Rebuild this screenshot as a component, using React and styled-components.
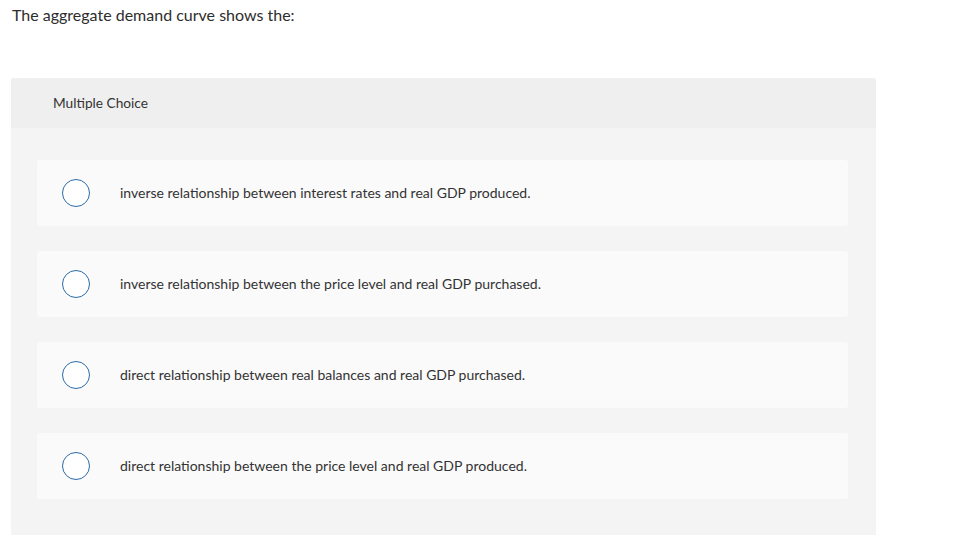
import styled, { createGlobalStyle } from 'styled-components'

const GlobalStyle = createGlobalStyle`
    body {
        margin: 0;
        background: #fff;
        font-family: Lato, "Open Sans", Arial, sans-serif;
        color: #333;
    }
`

const Page = styled.div`
    padding: 5px 0 0 11px;
    width: 865px;
`

const Question = styled.p`
    margin: 0 0 0 1px;
    font-size: 16px;
    line-height: 20px;
    color: #2d2d2d;
`

const Panel = styled.div`
    margin-top: 53px;
    background: #f4f4f4;
    border-radius: 3px 3px 0 0;
    padding-bottom: 40px;
`

const PanelHeader = styled.div`
    height: 50px;
    display: flex;
    align-items: center;
    padding: 0 0 1px 42px;
    box-sizing: border-box;
    background: #efefef;
    border-radius: 3px 3px 0 0;
    font-size: 13.7px;
    color: #333;
`

const Options = styled.ul`
    list-style: none;
    margin: 0;
    padding: 32px 28px 0 26px;
    display: flex;
    flex-direction: column;
    gap: 25px;
`

const Option = styled.li`
    height: 66px;
    display: flex;
    align-items: center;
    background: #fafafa;
    border-radius: 3px;
    padding-left: 25px;
    cursor: pointer;
`

const Radio = styled.span`
    box-sizing: border-box;
    width: 28px;
    height: 28px;
    border-radius: 50%;
    border: 1.5px solid #2b6aa8;
    background: #fff;
    flex-shrink: 0;
`

const Label = styled.span`
    margin: 0 0 2px 30px;
    font-size: 14px;
    color: #333;
`

const choices = [
    'inverse relationship between interest rates and real GDP produced.',
    'inverse relationship between the price level and real GDP purchased.',
    'direct relationship between real balances and real GDP purchased.',
    'direct relationship between the price level and real GDP produced.',
]

export default function App() {
    return (
        <>
            <GlobalStyle />
            <Page>
                <Question>The aggregate demand curve shows the:</Question>
                <Panel>
                    <PanelHeader>Multiple Choice</PanelHeader>
                    <Options>
                        {choices.map(c => (
                            <Option key={c}>
                                <Radio />
                                <Label>{c}</Label>
                            </Option>
                        ))}
                    </Options>
                </Panel>
            </Page>
        </>
    )
}
